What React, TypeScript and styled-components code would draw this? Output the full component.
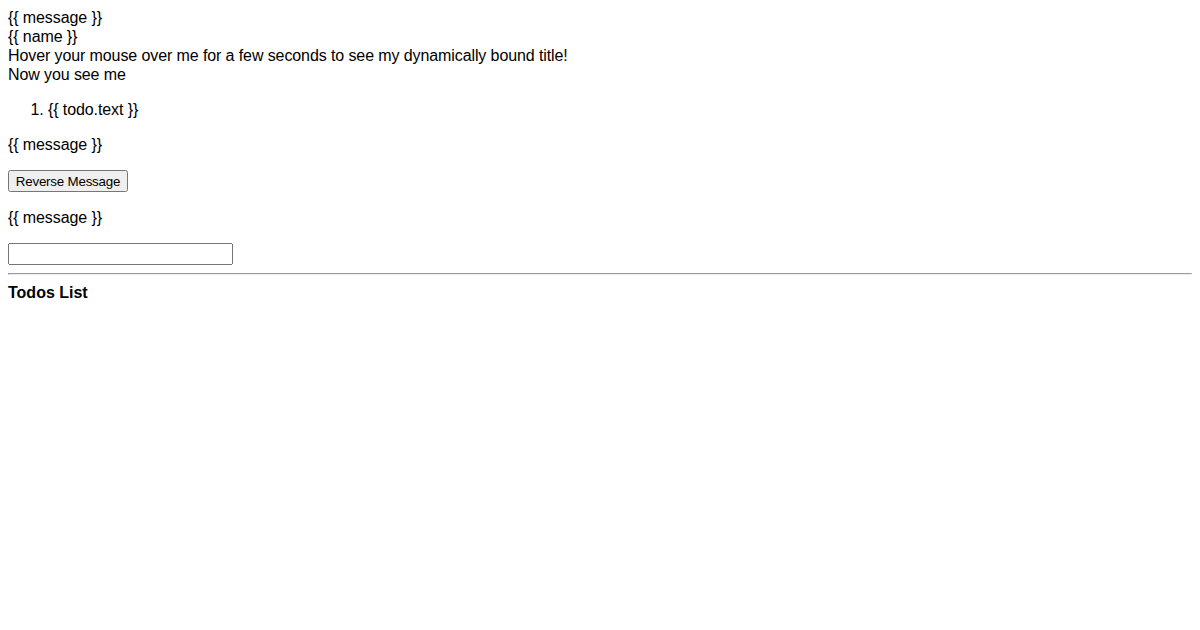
import { createGlobalStyle, styled } from 'styled-components';

const GlobalStyle = createGlobalStyle`
  body {
    margin: 8px;
    font-family: 'Liberation Sans', Arial, sans-serif;
    font-size: 16px;
    line-height: 19px;
    letter-spacing: -0.1px;
    color: #000;
    background: #fff;
  }
`;

const Line = styled.div``;

const TodoList = styled.ol`
  margin: 16px 0;
  padding-left: 40px;
`;

const Para = styled.p`
  margin: 16px 0;
`;

const ReverseButton = styled.button`
  box-sizing: border-box;
  width: 120px;
  height: 22px;
  padding: 1px 2px;
  white-space: nowrap;
  font-family: 'Liberation Sans', Arial, sans-serif;
  font-size: 13.333px;
  letter-spacing: -0.2px;
  vertical-align: top;
`;

const InputRow = styled.div`
  height: 22px;
`;

const TextInput = styled.input`
  box-sizing: border-box;
  width: 225px;
  height: 22px;
  margin: 0;
  font-family: 'Liberation Sans', Arial, sans-serif;
  font-size: 13.333px;
  vertical-align: top;
`;

const Rule = styled.hr`
  margin: 8px 0;
`;

const ListTitle = styled.div`
  font-weight: bold;
  letter-spacing: 0;
`;

const App = () => {
  return (
    <>
      <GlobalStyle />
      <Line>{'{{ message }}'}</Line>
      <Line>{'{{ name }}'}</Line>
      <Line>Hover your mouse over me for a few seconds to see my dynamically bound title!</Line>
      <Line>Now you see me</Line>
      <TodoList>
        <li>{'{{ todo.text }}'}</li>
      </TodoList>
      <Para>{'{{ message }}'}</Para>
      <ReverseButton>Reverse Message</ReverseButton>
      <Para>{'{{ message }}'}</Para>
      <InputRow>
        <TextInput type="text" />
      </InputRow>
      <Rule />
      <ListTitle>Todos List</ListTitle>
    </>
  );
};

export default App;
